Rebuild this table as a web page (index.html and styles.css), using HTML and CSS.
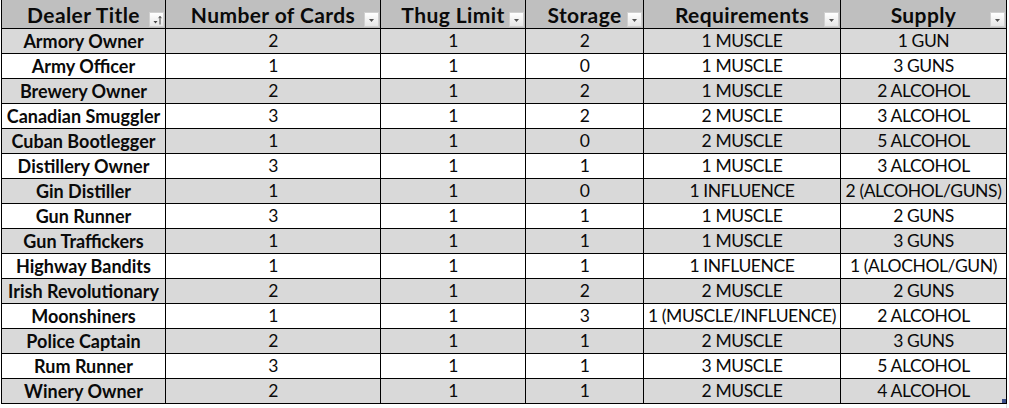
FILE: index.html
```html
<!DOCTYPE html>
<html lang="en">
<head>
<meta charset="utf-8">
<title>Dealers</title>
<link rel="stylesheet" href="styles.css">
</head>
<body>
<div class="sheet">
<table class="dealers">
<colgroup>
<col class="c1"><col class="c2"><col class="c3"><col class="c4"><col class="c5"><col class="c6">
</colgroup>
<thead>
<tr>
<th><span class="lbl">Dealer Title</span><span class="filter sorted"><svg viewBox="0 0 15 15" width="15" height="15"><path d="M4.5 9h4l-2 2.5z" fill="#444"/><path d="M11 12.5V4.5M9.6 6.2l1.4-1.8 1.4 1.8" stroke="#444" stroke-width="1" fill="none"/></svg></span></th>
<th><span class="lbl">Number of Cards</span><span class="filter"><svg viewBox="0 0 15 15" width="15" height="15"><path d="M5 7h5l-2.5 3z" fill="#555"/></svg></span></th>
<th><span class="lbl">Thug Limit</span><span class="filter"><svg viewBox="0 0 15 15" width="15" height="15"><path d="M5 7h5l-2.5 3z" fill="#555"/></svg></span></th>
<th><span class="lbl">Storage</span><span class="filter"><svg viewBox="0 0 15 15" width="15" height="15"><path d="M5 7h5l-2.5 3z" fill="#555"/></svg></span></th>
<th><span class="lbl">Requirements</span><span class="filter"><svg viewBox="0 0 15 15" width="15" height="15"><path d="M5 7h5l-2.5 3z" fill="#555"/></svg></span></th>
<th><span class="lbl">Supply</span><span class="filter"><svg viewBox="0 0 15 15" width="15" height="15"><path d="M5 7h5l-2.5 3z" fill="#555"/></svg></span></th>
</tr>
</thead>
<tbody>
<tr><td>Armory Owner</td><td>2</td><td>1</td><td>2</td><td>1 MUSCLE</td><td>1 GUN</td></tr>
<tr><td>Army Officer</td><td>1</td><td>1</td><td>0</td><td>1 MUSCLE</td><td>3 GUNS</td></tr>
<tr><td>Brewery Owner</td><td>2</td><td>1</td><td>2</td><td>1 MUSCLE</td><td>2 ALCOHOL</td></tr>
<tr><td>Canadian Smuggler</td><td>3</td><td>1</td><td>2</td><td>2 MUSCLE</td><td>3 ALCOHOL</td></tr>
<tr><td>Cuban Bootlegger</td><td>1</td><td>1</td><td>0</td><td>2 MUSCLE</td><td>5 ALCOHOL</td></tr>
<tr><td>Distillery Owner</td><td>3</td><td>1</td><td>1</td><td>1 MUSCLE</td><td>3 ALCOHOL</td></tr>
<tr><td>Gin Distiller</td><td>1</td><td>1</td><td>0</td><td>1 INFLUENCE</td><td>2 (ALCOHOL/GUNS)</td></tr>
<tr><td>Gun Runner</td><td>3</td><td>1</td><td>1</td><td>1 MUSCLE</td><td>2 GUNS</td></tr>
<tr><td>Gun Traffickers</td><td>1</td><td>1</td><td>1</td><td>1 MUSCLE</td><td>3 GUNS</td></tr>
<tr><td>Highway Bandits</td><td>1</td><td>1</td><td>1</td><td>1 INFLUENCE</td><td>1 (ALOCHOL/GUN)</td></tr>
<tr><td>Irish Revolutionary</td><td>2</td><td>1</td><td>2</td><td>2 MUSCLE</td><td>2 GUNS</td></tr>
<tr><td>Moonshiners</td><td>1</td><td>1</td><td>3</td><td>1 (MUSCLE/INFLUENCE)</td><td>2 ALCOHOL</td></tr>
<tr><td>Police Captain</td><td>2</td><td>1</td><td>1</td><td>2 MUSCLE</td><td>3 GUNS</td></tr>
<tr><td>Rum Runner</td><td>3</td><td>1</td><td>1</td><td>3 MUSCLE</td><td>5 ALCOHOL</td></tr>
<tr><td>Winery Owner</td><td>2</td><td>1</td><td>1</td><td>2 MUSCLE</td><td>4 ALCOHOL<span class="handle"></span></td></tr>
</tbody>
</table>
</div>
</body>
</html>
```
FILE: styles.css
```css
html, body {
  margin: 0;
  padding: 0;
  background: #ffffff;
}
.sheet {
  width: 1009px;
  height: 408px;
  overflow: hidden;
  padding-left: 1px;
  box-sizing: border-box;
  background:
    linear-gradient(to right, transparent 1006px, #dadcdd 1006px, #dadcdd 1007px, transparent 1007px);
}
.dealers {
  border-collapse: collapse;
  table-layout: fixed;
  width: 1005px;
  font-family: Lato, "Open Sans", sans-serif;
  color: #0a0a0a;
}
.c1 { width: 164px; }
.c2 { width: 215px; }
.c3 { width: 145px; }
.c4 { width: 118px; }
.c5 { width: 197px; }
.c6 { width: 166px; }
.dealers th,
.dealers td {
  border: 1px solid #000;
  padding: 0;
  text-align: center;
  white-space: nowrap;
  overflow: visible;
}
.dealers thead th {
  border-top: none;
  height: 27px;
  padding-top: 1px;
  background: #bfbfbf;
  font-size: 21px;
  letter-spacing: 0.4px;
  font-weight: 700;
  position: relative;
  vertical-align: middle;
}
.dealers td {
  height: 24px;
  font-size: 17.5px;
  letter-spacing: -0.4px;
  font-weight: 400;
  line-height: 24px;
  position: relative;
}
.dealers td:first-child {
  font-weight: 700;
  font-size: 18px;
  letter-spacing: 0;
}
.dealers tbody tr:nth-child(odd) td {
  background: #d9d9d9;
}
.dealers tbody tr:nth-child(even) td {
  background: #ffffff;
}
.filter {
  position: absolute;
  right: 1px;
  bottom: 1px;
  width: 15px;
  height: 15px;
  box-sizing: border-box;
  border: 1px solid #d0d0d0;
  background: linear-gradient(#ffffff, #e6e6e6);
  display: flex;
}
.filter svg {
  display: block;
  margin: -1px;
}
.handle {
  position: absolute;
  right: 0;
  bottom: 0;
  width: 4px;
  height: 4px;
  background: #3b4f8a;
}
```
